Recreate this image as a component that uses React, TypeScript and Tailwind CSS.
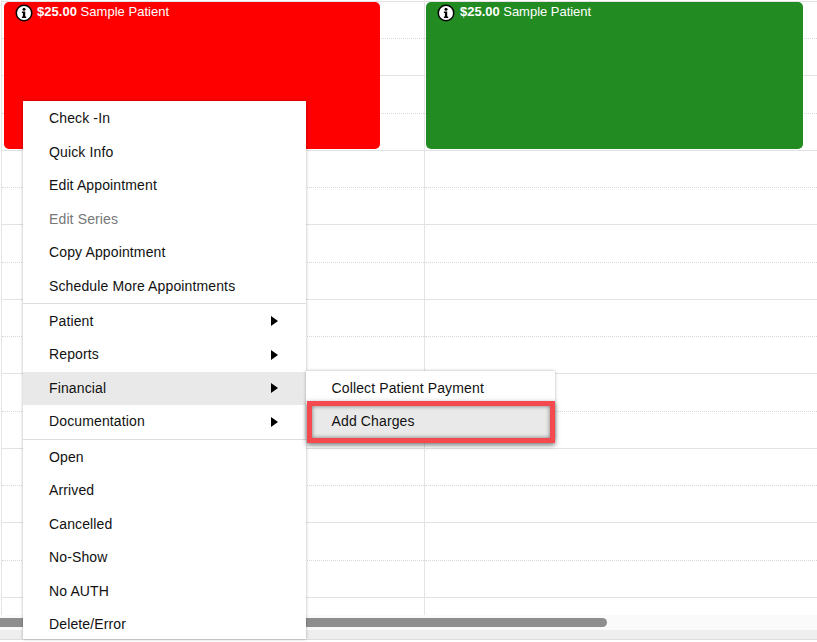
const slots = Array.from({ length: 17 }, (_, i) => i);

const groups: { label: string; sub?: boolean; muted?: boolean; active?: boolean }[][] = [
  [
    { label: "Check -In" },
    { label: "Quick Info" },
    { label: "Edit Appointment" },
    { label: "Edit Series", muted: true },
    { label: "Copy Appointment" },
    { label: "Schedule More Appointments" },
  ],
  [
    { label: "Patient", sub: true },
    { label: "Reports", sub: true },
    { label: "Financial", sub: true, active: true },
    { label: "Documentation", sub: true },
  ],
  [
    { label: "Open" },
    { label: "Arrived" },
    { label: "Cancelled" },
    { label: "No-Show" },
    { label: "No AUTH" },
    { label: "Delete/Error" },
  ],
];

function InfoDot() {
  return (
    <svg viewBox="0 0 18 18" className="mt-[2px] size-[18px] shrink-0">
      <circle cx="9" cy="9" r="8.5" fill="#000000" />
      <circle cx="9" cy="9" r="7" fill="#ffffff" />
      <circle cx="9" cy="5.2" r="1.5" fill="#000000" />
      <path d="M6.9 7.6h3.3v5h1v1.4H6.9v-1.4h1v-3.6h-1z" fill="#000000" />
    </svg>
  );
}

function Appointment({ color, inset, gap }: { color: string; inset: string; gap: string }) {
  return (
    <div className={`flex h-[147px] items-start rounded-[5px] pl-[11px] text-[13px] leading-[20px] text-white ${inset} ${color}`}>
      <InfoDot />
      <span className={gap}>
        <b>$25.00</b> Sample Patient
      </span>
    </div>
  );
}

function Column({ color, inset, gap, className }: { color: string; inset: string; gap: string; className: string }) {
  return (
    <div className={`relative h-full overflow-hidden border-l border-[#e4e4e4] ${className}`}>
      <div className="h-[1.9px] border-b border-[#e2e2e2]" />
      {slots.map((i) => (
        <div
          key={i}
          className={
            i % 2 === 0
              ? "h-[37.25px] border-b border-dotted border-[#d8d8d8]"
              : "h-[37.25px] border-b border-[#e2e2e2]"
          }
        />
      ))}
      <div className="absolute top-[2px] right-0 left-0">
        <Appointment color={color} inset={inset} gap={gap} />
      </div>
    </div>
  );
}

function MenuItem({ label, sub, muted, active }: { label: string; sub?: boolean; muted?: boolean; active?: boolean }) {
  return (
    <div
      className={`flex h-[33.5px] items-center justify-between pr-[28px] pl-[26px] ${active ? "bg-[#e9e9e9]" : ""} ${
        muted ? "text-[#777777]" : "text-[#111111]"
      }`}
    >
      <span>{label}</span>
      {sub ? <span className="h-0 w-0 border-y-[5px] border-l-[7px] border-y-transparent border-l-black" /> : null}
    </div>
  );
}

export default function App() {
  return (
    <div
      className="relative flex h-[642px] w-[817px] flex-col overflow-hidden bg-white text-[14px] tracking-[0.13px]"
      style={{ fontFamily: '"Liberation Sans", Arial, sans-serif' }}
    >
      <div className="flex h-[615px] pl-[1px]">
        <Column color="bg-[#ff0000]" inset="mr-[44px] ml-[2px]" gap="ml-[4px] tracking-[0.03px]" className="w-[423px]" />
        <Column color="bg-[#228b22]" inset="mr-[14px] ml-[1px]" gap="ml-[5px] tracking-[-0.02px]" className="flex-1" />
      </div>

      <div className="h-[15px] bg-[#fafafa] pt-[3px]">
        <div className="h-[9px] w-[607px] rounded-r-full bg-[#8e8e8e]" />
      </div>
      <div className="h-[10px] border-b border-[#dddddd] bg-[#eeeeee]" />

      <div className="absolute top-[101px] left-[23px] h-[538px] w-[283px] bg-white pt-[1px] shadow-[0_0_3px_rgba(0,0,0,0.3)]">
        {groups.map((group, i) => (
          <div key={i} className={i === 0 ? "" : i === 1 ? "border-t border-[#dddddd] pt-[0.6px]" : "border-t border-[#dddddd] pt-[1px]"}>
            {group.map((item) => (
              <MenuItem key={item.label} {...item} />
            ))}
          </div>
        ))}
      </div>

      <div className="absolute top-[371px] left-[306px] w-[249px] bg-white text-[#111111] shadow-[0_0_3px_rgba(0,0,0,0.3)]">
        <div className="flex h-[34px] items-center pl-[25.5px]">Collect Patient Payment</div>
        <div className="flex h-[33.5px] items-center bg-[#e9e9e9] pl-[25.5px]">Add Charges</div>
      </div>

      <div className="absolute top-[401px] left-[307px] h-[42px] w-[248px] border-[5px] border-[#f44a4f] shadow-[0_2px_5px_rgba(0,0,0,0.55),inset_0_0_4px_rgba(0,0,0,0.5)]" />
    </div>
  );
}
